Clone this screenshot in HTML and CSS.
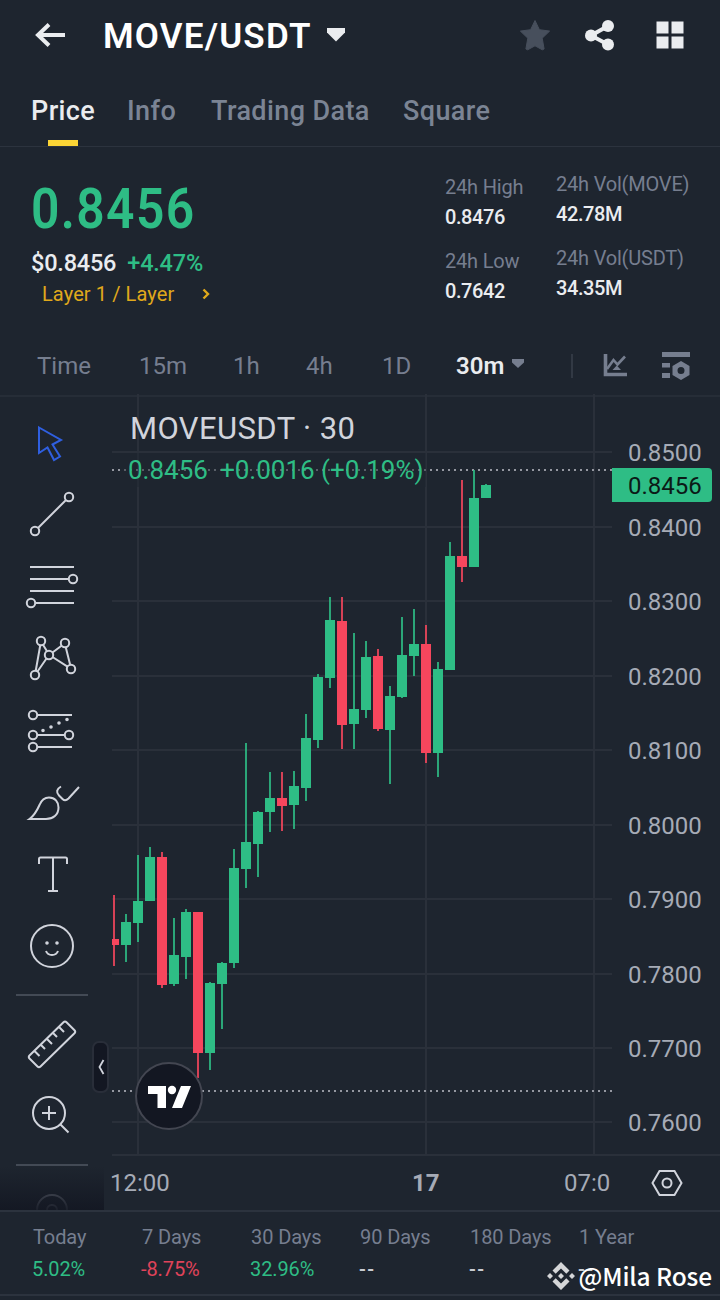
FILE: index.html
```html
<!DOCTYPE html>
<html lang="en">
<head>
  <meta charset="UTF-8">
  <meta name="viewport" content="width=device-width, initial-scale=1.0">
  <title>MOVE/USDT</title>
  <link rel="stylesheet" href="styles.css">
</head>
<body>

<header class="header">
  <svg class="back" width="32" height="28" viewBox="0 0 32 28"><path d="M31 14H4M15 3.500L4 14l11 10.500" fill="none" stroke="#eaecef" stroke-width="4"/></svg>
  <h1 class="pair">MOVE/USDT</h1>
  <svg class="pair-caret" width="18" height="14" viewBox="0 0 18 14"><path d="M0 0h18v4.500L9 13.500 0 4.500z" fill="#eaecef"/></svg>
  <div class="header-icons">
    <svg width="32" height="32" viewBox="0 0 32 32"><path d="M16 1.500l4.400 9.200 10.200 1.400-7.400 7.100 1.900 10.800-1.800.8-7.300-4-7.300 4-1.800-.8 1.900-10.800L1.400 12.100l10.200-1.400z" fill="#474f5c" stroke="#474f5c" stroke-linejoin="round"/></svg>
    <svg width="32" height="32" viewBox="0 0 32 32" fill="#eaecef"><path d="M24 7L7 16.500 24 25.500" fill="none" stroke="#eaecef" stroke-width="4"/><circle cx="24" cy="7" r="6"/><circle cx="7" cy="16.500" r="6"/><circle cx="24" cy="25.500" r="6"/></svg>
    <svg width="28" height="28" viewBox="0 0 28 28" fill="#eaecef"><path d="M.5.500h12v12H.5zM15.500.500h12v12h-12zM.5 15.500h12v12H.5zM15.500 15.500h12v12h-12z"/></svg>
  </div>
</header>

<nav class="tabs">
  <a class="tab active">Price</a>
  <a class="tab tab-info">Info</a>
  <a class="tab tab-data">Trading Data</a>
  <a class="tab tab-square">Square</a>
</nav>

<section class="summary">
  <div class="price-box">
    <div class="price">0.8456</div>
    <div class="price-sub"><span class="usd">$0.8456</span><span class="change">+4.47%</span></div>
    <div class="sector"><span>Layer 1 / Layer</span>
      <svg width="8" height="12" viewBox="0 0 8 12"><path d="M1.500 1.500L6 6l-4.500 4.500" fill="none" stroke="#e0a91b" stroke-width="2.400"/></svg>
    </div>
  </div>
  <dl class="stats stats-range">
    <dt>24h High</dt><dd>0.8476</dd>
    <dt>24h Low</dt><dd>0.7642</dd>
  </dl>
  <dl class="stats stats-volume">
    <dt>24h Vol(MOVE)</dt><dd>42.78M</dd>
    <dt>24h Vol(USDT)</dt><dd>34.35M</dd>
  </dl>
</section>

<div class="intervals">
  <span>Time</span>
  <span>15m</span>
  <span>1h</span>
  <span>4h</span>
  <span>1D</span>
  <span class="selected">30m</span>
  <svg class="interval-caret" width="14" height="10" viewBox="0 0 14 10"><path d="M1 0h12v3.500L7 9 1 3.500z" fill="#767e8f"/></svg>
  <i class="divider"></i>
  <svg width="24" height="24" viewBox="0 0 24 24"><path d="M2.500 0v20.500H24" fill="none" stroke="#767e8f" stroke-width="3.600"/><path d="M4 15l6.500-9 4 4.500L22 2.500" fill="none" stroke="#767e8f" stroke-width="2.600"/><path d="M9.500 16h8.500l-4.250-4.500z" fill="#767e8f"/></svg>
  <svg width="30" height="30" viewBox="0 0 30 30" fill="#767e8f"><path d="M1 1h28v5H1zM1 12h8v4.500H1zM1 22h8v5H1z"/><path fill-rule="evenodd" d="M20 10l8.500 5v9L20 29l-8.500-5v-9zM20 16a3.500 3.500 0 1 0 0 7 3.500 3.500 0 0 0 0-7z"/></svg>
</div>

<main class="workspace">
  <aside class="toolbar">
    <button class="tool"><svg viewBox="0 0 56 56"><path class="cursor" d="M15 13.500L37 26l-8.500 4.500L36 42.500 30 46l-6.500-12.500L15 39z"/></svg></button>
    <button class="tool"><svg viewBox="0 0 56 56"><circle cx="45" cy="11" r="4.200"/><circle cx="11" cy="45" r="4.200"/><path d="M14 42l28-28"/></svg></button>
    <button class="tool"><svg viewBox="0 0 56 56"><path d="M6 9h44M6 21h39M6 33h44M11 45h39"/><circle cx="49" cy="21" r="4.200"/><circle cx="7" cy="45" r="4.200"/></svg></button>
    <button class="tool"><svg viewBox="0 0 56 56"><path d="M16.300 15l-4.600 26M19 14.800l4 6.500M13.500 41.500l9-13M28.500 22.500l9-6.800M28.500 27l15 9.700M41.700 17l4.500 18"/><circle cx="17" cy="11" r="4.200"/><circle cx="41" cy="13" r="4.200"/><circle cx="25" cy="25" r="4.200"/><circle cx="47" cy="39" r="4.200"/><circle cx="11" cy="45" r="4.200"/></svg></button>
    <button class="tool"><svg viewBox="0 0 56 56"><path d="M13 13h35M13 33h28M13 45h35"/><circle cx="9" cy="13" r="4.200"/><circle cx="9" cy="33" r="4.200"/><circle cx="45" cy="33" r="4.200"/><circle cx="9" cy="45" r="4.200"/><path class="dots" d="M19 28.500h0M27 25h0M35 21h0M43 17.500h0"/></svg></button>
    <button class="tool"><svg viewBox="0 0 56 56"><path d="M5.500 45c5.500-4 8-9.500 10-14 2-5 5.500-7.500 9.500-7.500 6 0 9.500 4.500 9.500 10C34.500 41 29 45 22 45zM37 12.500c-4.500 2.500-5 6-2 9l3.500 3.500c2 2 4 1.500 6-.5L55 13"/></svg></button>
    <button class="tool"><svg viewBox="0 0 56 56"><path d="M15 18v-5q0-1.500 1.500-1.500h25q1.500 0 1.500 1.500v5M29 11.500V45M24 45h10"/></svg></button>
    <button class="tool"><svg viewBox="0 0 56 56"><circle cx="28" cy="28" r="21"/><path d="M22 33q1.500 4 6 4t6-4"/><path class="dots" d="M23 25h0M33 25h0"/></svg></button>
    <hr>
    <button class="tool"><svg viewBox="0 0 56 56"><path d="M39.500 6.200q1.500-1.500 3 0l8 8q1.500 1.500 0 3L16.500 50.500q-1.500 1.500-3 0l-8-8q-1.500-1.500 0-3zM10.500 35l5 5M17 29l4 4M23 23l5 5M29 17l4 4M35 11l5 5"/></svg></button>
    <button class="tool"><svg viewBox="0 0 56 56"><circle cx="25" cy="25" r="16"/><path d="M18 25h14M25 18v14M36.500 36.500l8 8"/></svg></button>
    <hr>
    <button class="tool faded"><svg viewBox="0 0 56 56"><circle cx="28" cy="24" r="15"/><circle cx="28" cy="24" r="5"/></svg></button>
    <div class="toolbar-fade"></div>
    <div class="collapse"><svg width="8" height="16" viewBox="0 0 8 16"><path d="M6.500 1L2.500 8l4 7" fill="none" stroke="#d1d4dc" stroke-width="1.800"/></svg></div>
  </aside>

  <svg class="chart" width="616" height="816" viewBox="104 394 616 816">
    <g id="grid"></g>
    <path class="dotted" d="M112 470H612M112 1091H612"/>
    <g id="candles"></g>
    <g id="labels"></g>
    <rect x="123" y="453" width="303" height="34" fill="#1e252f" opacity=".5"/>
    <text class="symbol" x="130" y="439">MOVEUSDT · 30</text>
    <text class="legend" x="128" y="479">0.8456</text>
    <text class="legend" x="220" y="479">+0.0016 (+0.19%)</text>
    <path d="M612 468h96q4 0 4 4v26q0 4-4 4h-96z" fill="#2ebd85"/>
    <text class="last-price" x="628" y="494">0.8456</text>
    <text class="axis" x="110" y="1191">12:00</text>
    <text class="axis bold" x="412" y="1191">17</text>
    <text class="axis" x="564" y="1191">07:0</text>
    <g class="settings"><path d="M659.500 1171h15l7 12-7 12h-15l-7-12z"/><circle cx="667" cy="1183" r="4.500"/></g>
    <circle cx="169" cy="1096" r="33" fill="#131722" stroke="#434651" stroke-width="2"/>
    <path d="M148 1086h18v22h-8.500v-14H148zM181 1086h10l-9 22h-10z" fill="#fff"/>
    <circle cx="172" cy="1090" r="4.200" fill="#fff"/>
  </svg>
</main>

<footer class="performance">
  <div><span>Today</span><b class="up">5.02%</b></div>
  <div><span>7 Days</span><b class="down">-8.75%</b></div>
  <div><span>30 Days</span><b class="up">32.96%</b></div>
  <div><span>90 Days</span><b class="none">--</b></div>
  <div><span>180 Days</span><b class="none">--</b></div>
  <div><span>1 Year</span><b class="none">--</b></div>
  <div class="author">
    <svg width="28" height="28" viewBox="0 0 28 28" fill="#d5d6d8"><path d="M14 0l8.500 8.500-3.200 3.200L14 6.400l-5.300 5.300-3.200-3.200zM14 28l8.500-8.500-3.200-3.200-5.300 5.300-5.300-5.300-3.200 3.200zM14 11l3 3-3 3-3-3zM3 11l3 3-3 3-3-3zM25 11l3 3-3 3-3-3z"/></svg>
    <span>@Mila Rose</span>
  </div>
</footer>

<script>
  const SVG = "http://www.w3.org/2000/svg";

  function draw(parent, name, attrs, text) {
    const el = document.createElementNS(SVG, name);
    for (const key in attrs) el.setAttribute(key, attrs[key]);
    if (text) el.textContent = text;
    document.getElementById(parent).appendChild(el);
  }

  // body top, body bottom, wick top, wick bottom, 1 = falling
  const candles = [
    [939, 945, 895, 966, 1], [922, 945, 914, 962], [901, 923, 855, 942], [857, 901, 847, 901],
    [857, 985, 852, 988, 1], [955, 984, 918, 986], [912, 957, 909, 979], [912, 1053, 912, 1078, 1],
    [983, 1053, 982, 1070], [963, 984, 962, 1029], [868, 963, 849, 968], [842, 869, 743, 888],
    [812, 844, 811, 877], [798, 812, 772, 832], [798, 806, 772, 831, 1], [786, 805, 771, 829],
    [738, 788, 714, 801], [677, 740, 674, 748], [620, 678, 597, 688], [621, 725, 597, 749, 1],
    [709, 724, 633, 749], [657, 710, 641, 718], [656, 729, 649, 731, 1], [696, 730, 686, 784],
    [655, 697, 617, 698], [644, 656, 609, 676], [644, 753, 625, 763, 1], [669, 753, 662, 777],
    [556, 670, 542, 670], [556, 567, 480, 582, 1], [498, 567, 470, 567], [485, 498, 484, 498]
  ];
  const rows = [452, 527, 601, 676, 750, 825, 899, 974, 1048, 1122];

  rows.forEach((y, i) => {
    draw("grid", "path", { d: `M112 ${y}H612` });
    draw("labels", "text", { class: "axis", x: 628, y: y + 9 }, (0.85 - i * 0.01).toFixed(4));
  });
  [138, 426, 594].forEach(x => draw("grid", "path", { d: `M${x} 394V1155` }));
  draw("grid", "path", { d: "M112 1155H720" });

  candles.forEach(([top, bottom, high, low, falling], i) => {
    const x = 114 + i * 12;
    const left = Math.max(112, x - 5);
    const type = falling ? "fall" : "rise";
    draw("candles", "rect", { class: type + " wick", x: x - 1, y: high, width: 2, height: low - high });
    draw("candles", "rect", { class: type, x: left, y: top, width: x + 5 - left, height: bottom - top });
  });
</script>

</body>
</html>
```
FILE: styles.css
```css
* {
  box-sizing: border-box;
}
body {
  margin: 0;
  width: 720px;
  height: 1300px;
  overflow: hidden;
  background: #1e252f;
  color: #eaecef;
  font-family: Roboto, "Liberation Sans", sans-serif;
}
svg {
  display: block;
  flex: none;
}
.header {
  display: flex;
  align-items: center;
  height: 69px;
  padding: 0 36px 0 34px;
}
.pair {
  margin: 3px 0 0 37px;
  width: 224px;
  font-size: 35px;
  font-weight: 600;
  letter-spacing: 1.2px;
  color: #fff;
}
.header-icons {
  display: flex;
  align-items: center;
  margin-left: auto;
}
.header-icons svg:nth-child(2) {
  margin: 0 40px 0 33px;
}
.tabs {
  display: flex;
  height: 78px;
  padding: 28px 0 0 31px;
  border-bottom: 1px solid #2c333e;
  font-size: 27px;
  font-weight: 500;
  line-height: 29px;
  letter-spacing: .4px;
  color: #7b8494;
  white-space: nowrap;
}
.tab {
  display: flex;
  flex-direction: column;
  justify-content: space-between;
}
.tab.active {
  width: 64px;
  color: #eaecef;
}
.tab.active::after {
  content: "";
  width: 30px;
  height: 6px;
  margin-left: 17px;
  background: #fcd535;
}
.tab-info {
  width: 54px;
  margin-left: 32px;
}
.tab-data {
  width: 162px;
  margin-left: 30px;
}
.tab-square {
  width: 92px;
  margin-left: 30px;
}
.summary {
  display: flex;
  height: 189px;
  padding-left: 31px;
}
.price-box {
  width: 414px;
  padding-top: 32px;
}
.price {
  width: 200px;
  font-size: 56px;
  font-weight: 600;
  line-height: 60px;
  letter-spacing: 1.5px;
  color: #2ebd85;
  transform: scaleX(.89);
  transform-origin: left;
}
.price-sub {
  display: flex;
  gap: 11px;
  margin-top: 8px;
  font-size: 23.500px;
  font-weight: 500;
  line-height: 32px;
  letter-spacing: -.2px;
}
.change {
  color: #2ebd85;
}
.sector {
  display: flex;
  align-items: center;
  gap: 28px;
  margin: 3px 0 0 11px;
  font-size: 20px;
  line-height: 24px;
  letter-spacing: .1px;
  color: #e0a91b;
}
.stats {
  margin: 0;
  padding-top: 26px;
  font-size: 20px;
  line-height: 29px;
  letter-spacing: -.2px;
  white-space: nowrap;
}
.stats-range {
  width: 111px;
}
.stats-volume {
  padding-top: 23px;
}
.stats dt {
  color: #767e8f;
}
.stats dd {
  margin: 0;
  padding: 1px 0 15px;
  font-weight: 500;
  letter-spacing: -.4px;
}
.intervals {
  display: grid;
  grid-template-columns: 102px 94px 73px 76px 74px 55px 60px 32px 58px 30px;
  align-items: center;
  height: 59px;
  padding-left: 37px;
  font-size: 24px;
  color: #767e8f;
}
.interval-caret {
  margin-top: -3px;
}
.selected {
  color: #eaecef;
  font-weight: 600;
}
.divider {
  width: 2px;
  height: 24px;
  background: #323944;
}
.workspace {
  display: flex;
  height: 816px;
  margin-top: -1px;
  background: linear-gradient(#262d37, #262d37) 0 1px / 100% 2px no-repeat;
}
.toolbar {
  position: relative;
  width: 104px;
  padding-top: 12px;
}
.tool {
  display: block;
  width: 104px;
  height: 72px;
  padding: 8px 24px;
  border: 0;
  background: none;
}
.tool svg {
  width: 56px;
  height: 56px;
  fill: none;
  stroke: #d1d4dc;
  stroke-width: 2;
}
.tool .cursor {
  stroke: #2f5fe0;
}
.tool .dots {
  stroke-width: 3.600;
  stroke-linecap: round;
}
.toolbar hr {
  width: 72px;
  height: 2px;
  margin: 12px 16px;
  border: 0;
  background: #434a55;
}
.tool.faded {
  height: 32px;
  overflow: hidden;
}
.tool.faded svg {
  stroke: #6b717c;
}
.toolbar-fade {
  position: absolute;
  left: 0;
  bottom: 0;
  width: 104px;
  height: 44px;
  background: linear-gradient(rgba(19, 23, 34, 0), rgba(19, 23, 34, .9));
}
.collapse {
  position: absolute;
  left: 92px;
  top: 647px;
  z-index: 1;
  display: flex;
  align-items: center;
  justify-content: center;
  width: 17px;
  height: 52px;
  border: 2px solid #292e39;
  border-radius: 7px;
  background: #131722;
}
#grid path {
  stroke: #2a303a;
  stroke-width: 2;
}
.dotted {
  stroke: #9598a1;
  stroke-width: 2;
  stroke-dasharray: 2 4;
}
.rise {
  fill: #2ebd85;
}
.fall {
  fill: #f6465d;
}
.wick {
  opacity: .85;
}
.symbol {
  font-size: 31px;
  fill: #d1d4dc;
  letter-spacing: .4px;
}
.legend {
  font-size: 26px;
  fill: #2ebd85;
}
.axis {
  font-size: 24px;
  fill: #a6abb6;
}
.axis.bold {
  font-weight: 700;
}
.last-price {
  font-size: 24px;
  fill: #0b1a17;
}
.settings {
  fill: none;
  stroke: #d1d4dc;
  stroke-width: 2;
}
.performance {
  position: relative;
  display: grid;
  grid-template-columns: 109px 109px 109px 110px 109px 100px;
  height: 86px;
  padding: 9px 0 0 33px;
  border-top: 2px solid #2c333e;
  border-bottom: 2px solid #2c333e;
  font-size: 20px;
  line-height: 32px;
  letter-spacing: -.1px;
  color: #767e8f;
}
.performance span,
.performance b {
  display: block;
  font-weight: 400;
}
.performance b {
  margin-left: -1px;
  color: #c8ccd2;
}
.performance .none {
  font-weight: 500;
  letter-spacing: 1.5px;
}
.performance .up {
  color: #2ebd85;
}
.performance .down {
  color: #e0435a;
}
.author {
  position: absolute;
  right: 8px;
  bottom: 2px;
  display: flex;
  align-items: center;
  gap: 3px;
  color: #fff;
  font-family: "Noto Sans CJK SC", "Noto Sans", sans-serif;
  font-size: 24.500px;
  white-space: nowrap;
}
.performance .author span {
  font-weight: 500;
}
```
